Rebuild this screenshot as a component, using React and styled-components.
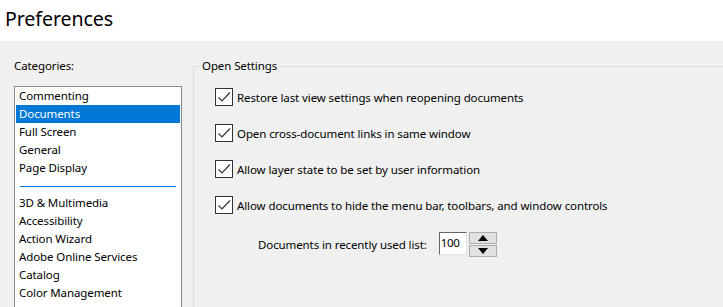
import React from "react";
import styled, { createGlobalStyle } from "styled-components";

const Global = createGlobalStyle`
  html, body { margin: 0; padding: 0; }
  body {
    background: #f0f0f0;
    font-family: "Noto Sans", "Open Sans", sans-serif;
    color: #000;
    overflow: hidden;
  }
`;

const Page = styled.div`
  width: 723px;
  height: 307px;
  display: flex;
  flex-direction: column;
  background: #f0f0f0;
  overflow: hidden;
  font-size: 11.5px;
  letter-spacing: -0.1px;
`;

const Header = styled.div`
  height: 41px;
  background: #fff;
  display: flex;
  align-items: center;
  padding-left: 5px;
  flex-shrink: 0;
`;

const Title = styled.h1`
  margin: 0;
  font-weight: 400;
  font-size: 19.6px;
  letter-spacing: -0.1px;
  color: #000;
  line-height: 1;
  padding-bottom: 4px;
`;

const Body = styled.div`
  display: flex;
  flex: 1;
  min-height: 0;
`;

const Left = styled.div`
  width: 168px;
  margin-left: 14px;
  padding-top: 17px;
  display: flex;
  flex-direction: column;
`;

const Label = styled.div`
  line-height: 16px;
  height: 28px;
`;

const List = styled.ul`
  list-style: none;
  margin: 0;
  padding: 0 1px;
  border: 1px solid #828790;
  border-bottom: none;
  background: #fff;
  flex: 1;
`;

const Item = styled.li`
  height: 18px;
  line-height: 18px;
  padding-left: 3px;
  white-space: nowrap;
  background: ${(p) => (p.$selected ? "#0078d7" : "transparent")};
  color: ${(p) => (p.$selected ? "#fff" : "#000")};
`;

const Separator = styled.li`
  height: 17px;
  display: flex;
  align-items: center;
  padding: 0 4px;
  &::after {
    content: "";
    flex: 1;
    height: 1px;
    background: #0078d7;
    margin-top: 1px;
  }
`;

const Right = styled.div`
  flex: 1;
  padding-left: 11px;
  padding-top: 17px;
`;

const Group = styled.fieldset`
  margin: 0;
  padding: 14px 0 0 21px;
  border: none;
  border-top: 1px solid #dcdcdc;
  border-left: 1px solid #dcdcdc;
  height: 100%;
  box-sizing: border-box;
  min-width: 0;
`;

const Legend = styled.legend`
  padding: 0 2px;
  margin-left: -15px;
  line-height: 16px;
`;

const CheckRow = styled.label`
  display: flex;
  align-items: center;
  gap: 4px;
  height: 18px;
  margin-bottom: 18px;
  white-space: nowrap;
`;

const Box = styled.span`
  width: 16px;
  height: 16px;
  border: 1px solid #333;
  background: #fff;
  display: flex;
  align-items: center;
  justify-content: center;
  flex-shrink: 0;
`;

const SpinRow = styled.div`
  display: flex;
  align-items: center;
  margin-left: 43px;
  margin-top: 10px;
  gap: 12px;
`;

const Spin = styled.div`
  display: flex;
  gap: 2px;
`;

const Input = styled.div`
  width: 25px;
  height: 21px;
  border: 1px solid;
  border-color: #646464 #e3e3e3 #e3e3e3 #646464;
  background: #fff;
  line-height: 19px;
  padding-left: 1px;
  box-sizing: content-box;
  letter-spacing: -0.4px;
`;

const Arrows = styled.div`
  display: flex;
  flex-direction: column;
  gap: 1px;
`;

const ArrowBtn = styled.div`
  width: 26px;
  height: 10px;
  border: 1px solid #adadad;
  background: #e1e1e1;
  display: flex;
  align-items: center;
  justify-content: center;
`;

const Check = () => (
  <Box>
    <svg width="16" height="16" viewBox="0 0 16 16">
      <polyline points="2.5,8.5 6,12 14,3.5" fill="none" stroke="#333" strokeWidth="1.2" />
    </svg>
  </Box>
);

const Tri = ({ up }) => (
  <svg width="10" height="6" viewBox="0 0 10 6">
    <polygon points={up ? "0,6 10,6 5,0" : "0,0 10,0 5,6"} fill="#000" />
  </svg>
);

const top = ["Commenting", "Documents", "Full Screen", "General", "Page Display"];
const rest = [
  "3D & Multimedia",
  "Accessibility",
  "Action Wizard",
  "Adobe Online Services",
  "Catalog",
  "Color Management",
];
const opts = [
  "Restore last view settings when reopening documents",
  "Open cross-document links in same window",
  "Allow layer state to be set by user information",
  "Allow documents to hide the menu bar, toolbars, and window controls",
];

export default function App() {
  return (
    <Page>
      <Global />
      <Header>
        <Title>Preferences</Title>
      </Header>
      <Body>
        <Left>
          <Label>Categories:</Label>
          <List>
            {top.map((t) => (
              <Item key={t} $selected={t === "Documents"}>{t}</Item>
            ))}
            <Separator />
            {rest.map((t) => (
              <Item key={t}>{t}</Item>
            ))}
          </List>
        </Left>
        <Right>
          <Group>
            <Legend>Open Settings</Legend>
            {opts.map((o) => (
              <CheckRow key={o}>
                <Check />
                {o}
              </CheckRow>
            ))}
            <SpinRow>
              <span>Documents in recently used list:</span>
              <Spin>
                <Input>100</Input>
                <Arrows>
                  <ArrowBtn><Tri up /></ArrowBtn>
                  <ArrowBtn><Tri /></ArrowBtn>
                </Arrows>
              </Spin>
            </SpinRow>
          </Group>
        </Right>
      </Body>
    </Page>
  );
}
